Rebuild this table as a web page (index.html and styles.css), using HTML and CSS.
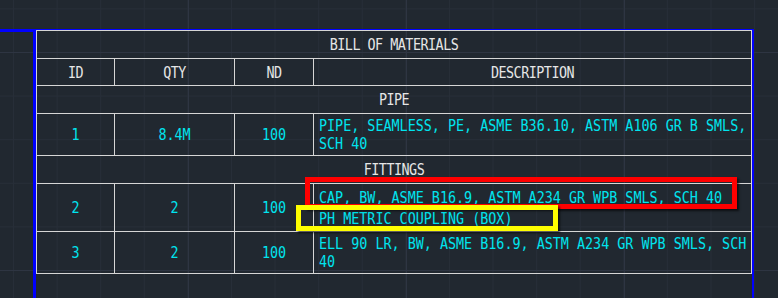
FILE: index.html
```html
<!DOCTYPE html>
<html>
  <head>
    <meta name="viewport" content="width=device-width, initial-scale=1" />
    <title>Bill of Materials</title>
    <link rel="stylesheet" href="styles.css">
  </head>

  <body>
    <div class="sheet">
      <div class="leader"></div>
      <div class="frame">
        <table class="bom">
          <colgroup>
            <col class="col-id" />
            <col class="col-qty" />
            <col class="col-nd" />
            <col class="col-desc" />
          </colgroup>
          <tr class="row-title">
            <td colspan="4" class="head"><span class="t">BILL OF MATERIALS</span></td>
          </tr>
          <tr class="row-head">
            <td class="head"><span class="t">ID</span></td>
            <td class="head"><span class="t">QTY</span></td>
            <td class="head"><span class="t">ND</span></td>
            <td class="head"><span class="t">DESCRIPTION</span></td>
          </tr>
          <tr class="row-group">
            <td colspan="4" class="head"><span class="t">PIPE</span></td>
          </tr>
          <tr class="row-item">
            <td><span class="t">1</span></td>
            <td><span class="t">8.4M</span></td>
            <td><span class="t">100</span></td>
            <td class="desc"><span class="t">PIPE, SEAMLESS, PE, ASME B36.10, ASTM A106 GR B SMLS,<br>SCH 40</span></td>
          </tr>
          <tr class="row-group">
            <td colspan="4" class="head"><span class="t">FITTINGS</span></td>
          </tr>
          <tr class="row-item row-tall">
            <td><span class="t">2</span></td>
            <td><span class="t">2</span></td>
            <td><span class="t">100</span></td>
            <td class="desc"><span class="t loose">CAP, BW, ASME B16.9, ASTM A234 GR WPB SMLS, SCH 40<br>PH METRIC COUPLING (BOX)</span></td>
          </tr>
          <tr class="row-item">
            <td><span class="t">3</span></td>
            <td><span class="t">2</span></td>
            <td><span class="t">100</span></td>
            <td class="desc"><span class="t">ELL 90 LR, BW, ASME B16.9, ASTM A234 GR WPB SMLS, SCH<br>40</span></td>
          </tr>
        </table>

        <!-- review markup drawn over the table -->
        <div class="markup markup-red"></div>
        <div class="markup markup-yellow"></div>
      </div>
    </div>
  </body>
</html>
```

FILE: styles.css
```css
/* ------------------------------ reset ------------------------------ */
* {
  margin: 0;
  padding: 0;
  box-sizing: border-box;
}

/* ------------------------------ model space ------------------------------ */
body {
  height: 298px;
  overflow: hidden;
  background-color: #212830;
  background-image:
    linear-gradient(to right, #2e3542 1px, transparent 1px),
    linear-gradient(to bottom, #2e3542 1px, transparent 1px),
    linear-gradient(to right, #272e38 1px, transparent 1px),
    linear-gradient(to bottom, #272e38 1px, transparent 1px);
  background-size: 218px 100%, 100% 218px, 43.6px 100%, 100% 43.6px;
  background-position: 188px 0, 0 52px, 13px 0, 0 8.4px;
  font-family: "DejaVu Sans Mono", "Liberation Mono", monospace;
}

/* ------------------------------ sheet border ------------------------------ */
.sheet {
  display: flex;
  align-items: flex-start;
  padding-top: 29px;
}
.leader {
  width: 33px;
  height: 3px;
  background: #0000ff;
}
.frame {
  position: relative;
  height: 269px;
  border-top: 1px solid #0000ff;
  border-left: 3px solid #0000ff;
  border-right: 2px solid #0000ff;
}

/* ------------------------------ table ------------------------------ */
.bom {
  width: 716px;
  table-layout: fixed;
  border-collapse: collapse;
  color: #00e4ee;
  font-size: 13.4px;
}
.col-id { width: 78px; }
.col-qty { width: 120px; }
.col-nd { width: 79px; }

.bom td {
  border: 1px solid #d6d6d6;
  text-align: center;
  vertical-align: middle;
  white-space: nowrap;
}
.bom td.head {
  color: #e6e6e6;
  letter-spacing: -0.5px;
}
.bom td.desc {
  text-align: left;
  padding-left: 5px;
}

.row-title { height: 28px; }
.row-head { height: 27px; }
.row-group { height: 28px; }
.row-item { height: 42px; }
.row-tall { height: 48px; }

/* cad text is tall and narrow */
.t {
  display: inline-block;
  line-height: 14px;
  transform: scaleY(1.23);
}
.t.loose {
  line-height: 17px;
}

/* ------------------------------ markup ------------------------------ */
.markup {
  position: absolute;
  border: 5px solid;
  box-shadow: 2px 2px 2px rgba(0, 0, 0, 0.6);
}
.markup-red {
  left: 269px;
  top: 147px;
  width: 432px;
  height: 32px;
  border-color: #ff0000;
}
.markup-yellow {
  left: 260px;
  top: 175px;
  width: 262px;
  height: 26px;
  border-color: #ffff00;
}
```
